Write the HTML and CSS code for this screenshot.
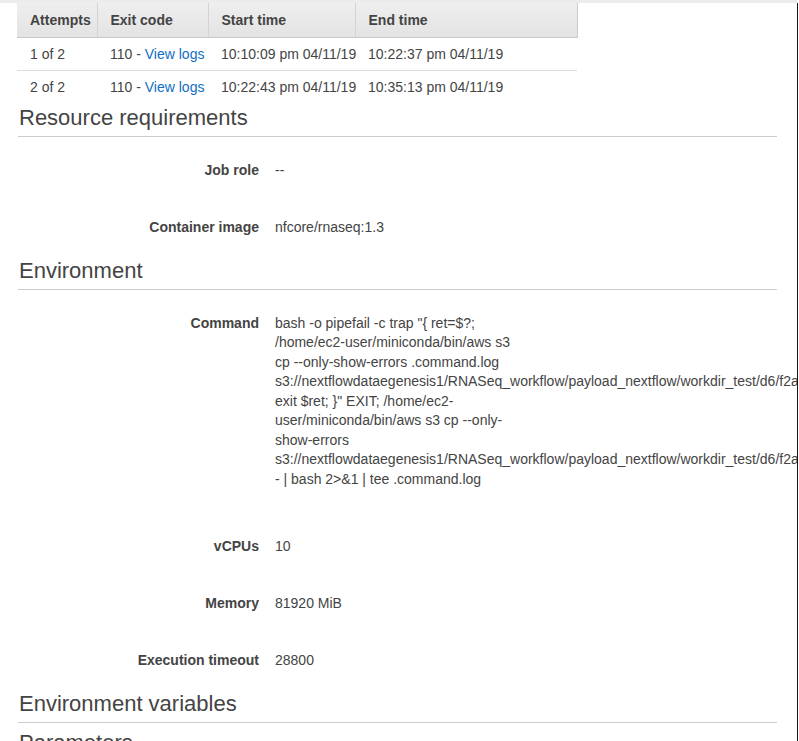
FILE: index.html
```html
<!DOCTYPE html>
<html lang="en">
<head>
<meta charset="utf-8">
<title>Job details</title>
<link rel="stylesheet" href="styles.css">
</head>
<body>
<div class="page">
  <div class="topbar"></div>
  <div class="main">
    <table class="attempts">
      <thead>
        <tr>
          <th class="c1">Attempts</th>
          <th class="c2">Exit code</th>
          <th class="c3">Start time</th>
          <th class="c4">End time</th>
        </tr>
      </thead>
      <tbody>
        <tr>
          <td>1 of 2</td>
          <td>110 - <a href="#" class="link">View logs</a></td>
          <td>10:10:09 pm 04/11/19</td>
          <td>10:22:37 pm 04/11/19</td>
        </tr>
        <tr>
          <td>2 of 2</td>
          <td>110 - <a href="#" class="link">View logs</a></td>
          <td>10:22:43 pm 04/11/19</td>
          <td>10:35:13 pm 04/11/19</td>
        </tr>
      </tbody>
    </table>

    <section class="section first">
      <h2 class="heading">Resource requirements</h2>
      <div class="kv">
        <div class="row"><div class="key">Job role</div><div class="val">--</div></div>
        <div class="row"><div class="key">Container image</div><div class="val">nfcore/rnaseq:1.3</div></div>
      </div>
    </section>

    <section class="section">
      <h2 class="heading">Environment</h2>
      <div class="kv">
        <div class="row cmd"><div class="key">Command</div><div class="val">bash -o pipefail -c trap "{ ret=$?; /home/ec2-user/miniconda/bin/aws s3 cp --only-show-errors .command.log s3://nextflowdataegenesis1/RNASeq_workflow/payload_nextflow/workdir_test/d6/f2a9c31e7b84d05f6a2c9e1b3d7f4a/.command.log||true; exit $ret; }" EXIT; /home/ec2-user/miniconda/bin/aws s3 cp --only-show-errors s3://nextflowdataegenesis1/RNASeq_workflow/payload_nextflow/workdir_test/d6/f2a9c31e7b84d05f6a2c9e1b3d7f4a/.command.run - | bash 2&gt;&amp;1 | tee .command.log</div></div>
        <div class="row"><div class="key">vCPUs</div><div class="val">10</div></div>
        <div class="row"><div class="key">Memory</div><div class="val">81920 MiB</div></div>
        <div class="row"><div class="key">Execution timeout</div><div class="val">28800</div></div>
      </div>
    </section>

    <section class="section">
      <h2 class="heading">Environment variables</h2>
    </section>

    <section class="section">
      <h2 class="heading">Parameters</h2>
    </section>
  </div>
</div>
</body>
</html>
```

FILE: styles.css
```css
html, body {
  margin: 0;
  padding: 0;
  background: #ffffff;
}

body {
  font-family: "Liberation Sans", Arial, Helvetica, sans-serif;
  font-size: 14px;
  color: #444444;
}

.page {
  width: 799px;
  height: 741px;
  overflow: hidden;
  display: flex;
  flex-direction: column;
}

.topbar {
  height: 3px;
  width: 797px;
  background: #ececec;
  flex: none;
}

.main {
  width: 798px;
  box-sizing: border-box;
  border-right: 1px solid #151515;
  flex: 1;
  overflow: hidden;
  padding-left: 17px;
  padding-right: 20px;
}

.attempts {
  border-collapse: collapse;
  width: 560px;
  table-layout: fixed;
  margin-bottom: 2px;
}

.attempts th {
  height: 34px;
  padding: 0 13px;
  box-sizing: border-box;
  text-align: left;
  font-weight: bold;
  color: #444444;
  background: linear-gradient(#eeeeee, #e3e3e3);
  border-left: 1px solid #d3d3d3;
  border-bottom: 1px solid #c8c8c8;
}

.attempts th.c1 {
  border-left: none;
}

.attempts th.c4 {
  border-right: 1px solid #cccccc;
}

.c1 { width: 80px; }
.c2 { width: 111px; }
.c3 { width: 147px; }
.c4 { width: 222px; }

.attempts td {
  height: 33px;
  padding: 0 13px;
  box-sizing: border-box;
  white-space: nowrap;
}

.attempts tbody tr:first-child td {
  border-bottom: 1px solid #dddddd;
}

.link {
  color: #0f6ec4;
  text-decoration: none;
}

.section {
  margin-top: 7px;
}

.section.first {
  margin-top: 0;
}

.heading {
  margin: 0;
  width: 759px;
  box-sizing: border-box;
  font-size: 22px;
  line-height: 26px;
  font-weight: normal;
  color: #444444;
  padding: 0 0 5px 1px;
  border-bottom: 1px solid #cccccc;
  margin-left: 1px;
}

.kv {
  display: flex;
  flex-direction: column;
}

.row {
  display: flex;
  gap: 16px;
  line-height: 19.5px;
  padding: 23.5px 0 14px;
}

.key {
  width: 242px;
  flex: none;
  text-align: right;
  font-weight: bold;
  color: #444444;
}

.val {
  width: 249px;
  flex: none;
}

.row.cmd .val {
  padding-bottom: 10px;
}
```
